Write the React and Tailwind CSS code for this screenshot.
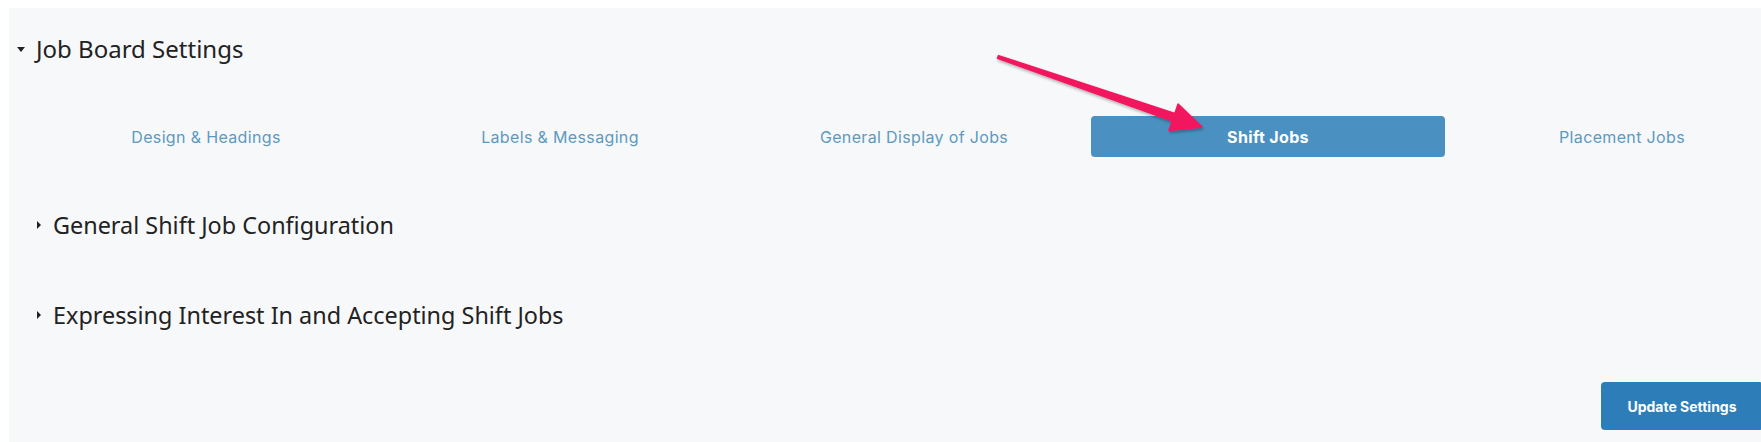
import React, { useState } from "react";

const tabs = [
  "Design & Headings",
  "Labels & Messaging",
  "General Display of Jobs",
  "Shift Jobs",
  "Placement Jobs",
];

const sections = [
  "General Shift Job Configuration",
  "Expressing Interest In and Accepting Shift Jobs",
];

const headingFont = { fontFamily: '"Noto Sans", "Open Sans", sans-serif' };
const tabFont = { fontFamily: 'Inter, "Open Sans", sans-serif' };

const CaretDown = () => (
  <svg width="8" height="5" viewBox="0 0 8 5" className="shrink-0">
    <path d="M0 0h8L4 5z" fill="#222" />
  </svg>
);

const CaretRight = () => (
  <svg width="4" height="8" viewBox="0 0 4 8" className="shrink-0">
    <path d="M0 0l4 4-4 4z" fill="#222" />
  </svg>
);

// pink callout arrow pointing at the active tab
const Arrow = () => (
  <svg
    className="absolute inset-0 pointer-events-none"
    width="1761"
    height="442"
    viewBox="0 0 1761 442"
  >
    <defs>
      <filter id="shadow" x="-10%" y="-30%" width="120%" height="160%">
        <feDropShadow dx="1" dy="2" stdDeviation="1.5" floodColor="#000" floodOpacity="0.3" />
      </filter>
    </defs>
    <polygon
      points="998.5,55.6 1174.9,113.5 1178.1,104 1202,127 1169,130.5 1172.3,121.1 997.5,58.4"
      fill="#f2195e"
      stroke="#f2195e"
      strokeWidth="1.5"
      strokeLinejoin="round"
      filter="url(#shadow)"
    />
  </svg>
);

export default function App() {
  const [active, setActive] = useState(3);

  return (
    <div className="relative w-full h-[442px] overflow-hidden bg-white">
      <div className="ml-[9px] mt-[8px] w-[1800px] h-[460px] bg-[#f7f8fa]">
        {/* Title */}
        <div className="flex items-center gap-[11px] pl-[8px] pt-[25px] h-[57px]">
          <CaretDown />
          <h2 className="text-[24px] leading-[32px] text-[#222]" style={headingFont}>
            Job Board Settings
          </h2>
        </div>

        {/* Tabs */}
        <div className="grid grid-cols-5 w-[1770px] ml-[20px] mt-[51px] h-[41px]">
          {tabs.map((t, i) => (
            <button
              key={t}
              onClick={() => setActive(i)}
              className={
                i === active
                  ? "h-[41px] rounded-[4px] bg-[#4a91c2] text-white text-[16px] tracking-[0.35px] font-bold"
                  : "h-[41px] text-[#5d9ac0] text-[16px] tracking-[0.35px]"
              }
              style={tabFont}
            >
              {t}
            </button>
          ))}
        </div>

        {/* Sections */}
        <div className="pl-[28px]">
          {sections.map((s, i) => (
            <div
              key={s}
              className={
                i === 0
                  ? "flex items-center gap-[12px] mt-[52px] h-[32px]"
                  : "flex items-center gap-[12px] mt-[58px] h-[32px]"
              }
            >
              <CaretRight />
              <span className="text-[23.4px] leading-[32px] text-[#222]" style={headingFont}>
                {s}
              </span>
            </div>
          ))}
        </div>

        {/* Footer */}
        <div className="flex justify-end pr-[46px] mt-[51px]">
          <button
            className="h-[48px] w-[162px] rounded-[4px] bg-[#2c7db8] text-white text-[14px] font-bold"
            style={tabFont}
          >
            Update Settings
          </button>
        </div>
      </div>
      <Arrow />
    </div>
  );
}
